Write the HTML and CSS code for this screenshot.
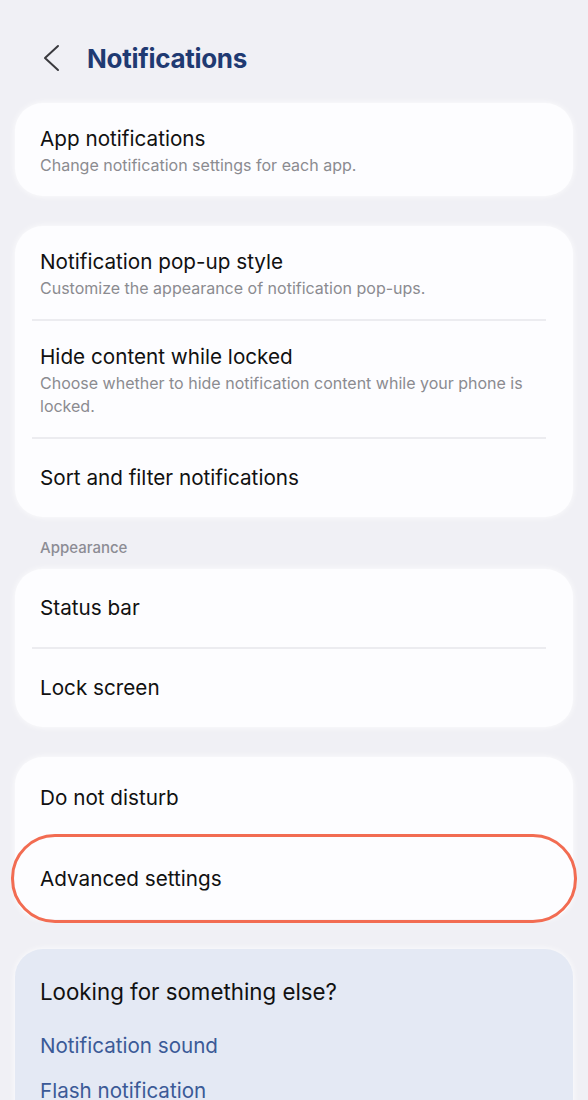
FILE: index.html
```html
<!DOCTYPE html>
<html lang="en">
<head>
    <meta charset="UTF-8">
    <meta name="viewport" content="width=device-width, initial-scale=1.0">
    <title>Notifications</title>
    <link rel="stylesheet" href="styles.css">
</head>
<body>
    <header class="top_bar">
        <svg class="back_icon" width="24" height="30" viewBox="0 0 24 30">
            <polyline points="17,3 4,15 17,27" fill="none" stroke="#3a3a3e" stroke-width="2" stroke-linecap="round" stroke-linejoin="round"/>
        </svg>
        <h1 class="page_title">Notifications</h1>
    </header>

    <section class="card">
        <div class="item">
            <div class="item_title">App notifications</div>
            <div class="item_sub">Change notification settings for each app.</div>
        </div>
    </section>

    <section class="card">
        <div class="item">
            <div class="item_title">Notification pop-up style</div>
            <div class="item_sub">Customize the appearance of notification pop-ups.</div>
        </div>
        <div class="divider"></div>
        <div class="item">
            <div class="item_title">Hide content while locked</div>
            <div class="item_sub">Choose whether to hide notification content while your phone is locked.</div>
        </div>
        <div class="divider"></div>
        <div class="item single">
            <div class="item_title">Sort and filter notifications</div>
        </div>
    </section>

    <div class="group_label">Appearance</div>

    <section class="card">
        <div class="item single">
            <div class="item_title">Status bar</div>
        </div>
        <div class="divider"></div>
        <div class="item single">
            <div class="item_title">Lock screen</div>
        </div>
    </section>

    <section class="card tall">
        <div class="item single">
            <div class="item_title">Do not disturb</div>
        </div>
        <div class="item single marked">
            <div class="item_title">Advanced settings</div>
        </div>
    </section>

    <section class="card suggest">
        <div class="suggest_title">Looking for something else?</div>
        <a class="suggest_link">Notification sound</a>
        <a class="suggest_link">Flash notification</a>
    </section>
</body>
</html>
```

FILE: styles.css
```css
body {
    margin: 0;
    background: #f0f0f5;
    font-family: Inter, Roboto, sans-serif;
    color: #111;
    padding: 0 15px 40px;
}
.top_bar {
    display: flex;
    align-items: center;
    height: 103px;
    padding-top: 13px;
    box-sizing: border-box;
}
.back_icon {
    margin-left: 26px;
    margin-right: 22px;
}
.page_title {
    margin: 0;
    font-size: 26px;
    font-weight: 700;
    color: #1f3a72;
    letter-spacing: -0.3px;
}
.card {
    background: #fdfdff;
    border-radius: 28px;
    margin-bottom: 30px;
    box-shadow: 0 0 6px rgba(255, 255, 255, 0.9);
}
.item {
    padding: 23px 25px 19px;
}
.item.single {
    display: flex;
    align-items: center;
    min-height: 78px;
    padding-top: 0;
    padding-bottom: 0;
    box-sizing: border-box;
}
.tall .item.single {
    min-height: 81px;
}
.item_title {
    font-size: 20.7px;
    line-height: 26px;
}
.item_sub {
    margin-top: 2px;
    font-size: 16px;
    line-height: 23px;
    color: #8b8b90;
}
.divider {
    height: 2px;
    background: #ececf0;
    margin: 0 27px 0 17px;
}
.marked {
    border-radius: 40px;
    outline: 3px solid #f26c52;
    outline-offset: 1px;
}
.group_label {
    margin: -9px 0 11px 25px;
    font-size: 15px;
    font-weight: 500;
    line-height: 20px;
    color: #8c8c94;
}
.suggest {
    background: #e4e9f4;
    padding: 29px 25px 30px;
}
.suggest_title {
    font-size: 22.3px;
    line-height: 28px;
    margin-bottom: 27px;
}
.suggest_link {
    display: block;
    font-size: 20.6px;
    line-height: 26px;
    color: #3b5a97;
    margin-bottom: 19px;
}
```
